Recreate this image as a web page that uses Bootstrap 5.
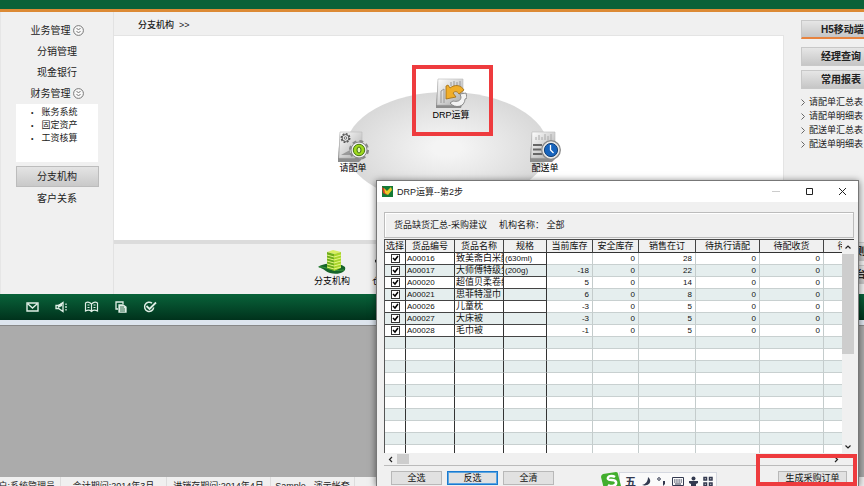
<!DOCTYPE html>
<html lang="zh-CN">
<head>
<meta charset="utf-8">
<meta name="viewport" content="width=device-width, initial-scale=1">
<title>DRP运算</title>
<link rel="stylesheet" href="https://cdn.jsdelivr.net/npm/bootstrap@5.3.0/dist/css/bootstrap.min.css">
<style>
body{font-family:"Liberation Sans","Noto Sans CJK SC",sans-serif;font-size:9px;line-height:14px;color:#222;background:#f0f0f0}
a{color:inherit;text-decoration:none}
svg{display:block;flex:none}
.topbar{height:12px;background:#0a6138;border-bottom:3px solid #dc8a35}
.workspace{height:282px;background:#f0f0f0}
.side{width:114px;padding-top:11px;border-right:1px solid #e2e2e2;border-left:1px solid #e6e6e6}
.side-link{font-size:10px;line-height:15px;height:15px;margin-bottom:6px;width:84px;gap:2px}
.side-sub{width:82px;height:58px;background:#fff;margin:-3px 0 4px;padding:2px 0 0 15px}
.side-sub li{line-height:13px;height:13px}
.side-sub li::before{content:"•";font-size:7px;margin-right:8px}
.side-on{width:83px;height:21px;line-height:19px;font-size:10px;border:1px solid #bcbcbc;background:linear-gradient(#e4e4e4,#c9c9c9);margin-bottom:4px}
.crumb{height:23px;padding:6px 0 0 24px;font-weight:500}
.canvas{height:205px;background:#fff;border:1px solid #e4e4e4;border-width:1px 1px 0 0}
.disc{left:232px;top:56px;width:202px;height:112px;border-radius:50%;background:radial-gradient(#f4f4f4 10%,#e2e2e2 50%,#cbcbcb)}
.node{width:60px;line-height:11px;color:#000}
.n-drp{left:307px;top:42px}.n-req{left:209px;top:95px}.n-send{left:401px;top:95px}
.mark-box{border:4px solid #ee3b3e;pointer-events:none}
.mark-drp{left:298px;top:29px;width:81px;height:71px}
.mark-make{right:1px;bottom:0;width:101px;height:32px}
.shelf{height:54px;border-top:4px solid #dcdcdc;padding:5px 0 0 193px;gap:8px}
.shelf a{width:50px;line-height:12px;color:#000}
.panel{width:80px;padding:8px 0 0 17px}
.panel-btn{height:19px;width:90px;padding:0 0 0 19px;border:1px solid #c8c8c8;border-radius:0;background:linear-gradient(#e6e6e6,#c6c6c6);font-size:10px;line-height:17px;font-weight:700;text-align:left;color:#222;flex:none}
.panel-btn.on{border-bottom:2px solid #e78440}
.panel-links{padding-top:6px}
.panel-link{line-height:14px;color:#222;white-space:nowrap;gap:4px}
.panel-low{margin-top:91px;gap:4px}
.panel-low .panel-btn{padding-left:54px}
.toolstrip{height:26px;background:linear-gradient(#09633a,#00321c);padding-left:26px;gap:16px}
.edge{height:6px;background:#dde5ee;border-bottom:1px solid #888}
.mdi{background:#ababab}
.statusbar{height:9px;background:#f0f0f0;white-space:nowrap}
.statusbar span{line-height:14px;padding-top:2px;border-right:1px solid #ddd;text-align:center;height:18px}
.s1{width:61px;padding-right:5px}.s2{width:106px}.s3{width:104px}.s4{width:84px}
.dlg{left:376px;right:5px;top:180px;bottom:0;background:#f0f0f0;border:1px solid #777;border-bottom:0;box-shadow:0 1px 7px rgba(0,0,0,.55)}
.dlg-title{height:21px;background:#fff;padding:0 11px 0 5px;color:#222}
.dlg-title button{border:0;background:none;padding:0;margin-left:24px}
.dlg-main{padding:10px 4px 0 7px}
.info{height:26px;border:1px solid #bcbcbc;box-shadow:inset 1px 1px #fff;padding-left:9px;gap:12px;margin-bottom:1px}
.grid-box{border-left:1px solid #555;border-top:1px solid #444;height:214px}
.grid-view{min-width:0}
.sheet{width:503px;table-layout:fixed;border-collapse:separate;border-spacing:0;background:#fff;color:#111}
.sheet th,.sheet td{height:12px;padding:0 3px 0 1px;line-height:11px;border-right:1px solid #c4cccc;border-bottom:1px solid #c8d0d0;overflow:hidden;white-space:nowrap;text-align:right;font-size:8px}
.sheet th{height:13px;line-height:12px;padding:0;text-align:center;font-weight:400;font-size:9px;background:#f0f0f0;border-right-color:#444;border-bottom-color:#333}
.sheet tbody tr:nth-child(even){background:#e5eeee}
.sheet td:nth-child(-n+4){text-align:left;border-right-color:#333}
.sheet td:nth-child(1){padding:0 0 0 6px}
.sheet td:nth-child(3){font-size:9px;padding-right:0}
.sheet .goods td:nth-child(-n+4){border-bottom-color:#444}
.tick{appearance:none;display:block;width:9px;height:9px;margin:0;border:1px solid #333;background:#fff url("data:image/svg+xml,%3Csvg xmlns='http://www.w3.org/2000/svg' viewBox='0 0 7 7'%3E%3Cpath d='M1 3l2 2 3-4' fill='none' stroke='%23000' stroke-width='1.5'/%3E%3C/svg%3E")}
.vbar{width:12px;background:#f0f0f0}
.vthumb{height:100px;background:#cdcdcd}
.hbar{height:13px;border-bottom:1px solid #bbb;padding:0 15px 0 4px}
.hthumb{width:12px;height:10px;background:#cdcdcd;margin-left:4px}
.btn-row{padding:5px 7px 0 7px;gap:5px}
.win-btn{width:51px;height:14px;padding:0;border:1px solid #b8b8b8;border-radius:0;background:#e1e1e1;font-size:9px;line-height:12px;color:#111}
.win-btn.focus-btn{border:1px solid #1a7ad0;outline:1px solid #5ca5e0;outline-offset:-2px}
.win-btn.make{width:69px}
.ime{left:223px;bottom:-6px;height:20px}
.ime-bar{background:#fafafa;border:1px solid #d5d8e0;padding:0 3px 0 5px;margin-left:-3px;height:19px;gap:5px;width:98px;font-size:11px;color:#33394f;font-weight:700}
</style>
<script src="https://cdn.jsdelivr.net/npm/bootstrap@5.3.0/dist/js/bootstrap.bundle.min.js"></script>
</head>
<body>
<div class="vh-100 d-flex flex-column overflow-hidden position-relative">
  <header class="topbar flex-shrink-0"></header>

  <div class="workspace d-flex flex-shrink-0 overflow-hidden">
    <nav class="side flex-shrink-0 d-flex flex-column align-items-center">
      <a href="#" class="side-link d-flex justify-content-center align-items-center"><span>业务管理</span>
        <svg width="11" height="11" viewBox="0 0 11 11" fill="none" stroke="#777"><circle cx="5.500" cy="5.500" r="4.900" fill="#f8f8f8"/><path d="M3.500 3l2 2 2-2M3.500 6l2 2 2-2"/></svg></a>
      <a href="#" class="side-link text-center">分销管理</a>
      <a href="#" class="side-link text-center">现金银行</a>
      <a href="#" class="side-link d-flex justify-content-center align-items-center"><span>财务管理</span>
        <svg width="11" height="11" viewBox="0 0 11 11" fill="none" stroke="#777"><circle cx="5.500" cy="5.500" r="4.900" fill="#f8f8f8"/><path d="M3.500 3l2 2 2-2M3.500 6l2 2 2-2"/></svg></a>
      <ul class="side-sub list-unstyled">
        <li><a href="#">账务系统</a></li>
        <li><a href="#">固定资产</a></li>
        <li><a href="#">工资核算</a></li>
      </ul>
      <a href="#" class="side-on text-center">分支机构</a>
      <a href="#" class="side-link text-center">客户关系</a>
    </nav>

    <main class="flex-fill">
      <div class="crumb">分支机构&nbsp; &gt;&gt;</div>
      <div class="canvas position-relative overflow-hidden">
        <div class="disc position-absolute"></div>
        <a href="#" class="node n-drp position-absolute d-flex flex-column align-items-center">
          <svg width="32" height="32" viewBox="0 0 32 32"><defs><linearGradient id="pg" x2="1" y2="1"><stop stop-color="#fff"/><stop offset="1" stop-color="#aaa"/></linearGradient></defs><path d="M3 1h25v23l-2 6H1V27z" fill="#8c8c8c"/><path d="M3 1h25v26H2z" fill="url(#pg)" stroke="#bbb" stroke-width=".6"/><path d="M6 25V13l3-2v14M16 8V4M19 8V3M22 8V4M25 8V3" fill="none" stroke="#999"/><path d="M11 8l2-1 2 3c5-4 11-3 14 2l-5 4c-2-3-4-3-6-1l3 4-10 2z" fill="#f0ae2b" stroke="#a06b10" stroke-width=".8"/><path d="M31 15l-6 1 1 3c0 4-4 5-8 4l-3 2c5 6 15 4 15-4l2-1z" fill="#f3f3f3" stroke="#777" stroke-width=".8"/></svg>
          <span>DRP运算</span></a>
        <a href="#" class="node n-req position-absolute d-flex flex-column align-items-center">
          <svg width="32" height="32" viewBox="0 0 32 32"><path d="M3 1h22v27l-3 3H1l0-4z" fill="#8c8c8c"/><path d="M3 1h22v26H2z" fill="url(#pg)" stroke="#bbb" stroke-width=".6"/><circle cx="8.500" cy="7" r="4" fill="none" stroke="#555" stroke-width="2" stroke-dasharray="1.800 1.300"/><circle cx="8.500" cy="7" r="3.400" fill="#eee" stroke="#555"/><circle cx="8.500" cy="7" r="1.300" fill="none" stroke="#555" stroke-width=".8"/><path d="M4 24l9-5v5z" fill="#999"/><circle cx="22" cy="19" r="8.500" fill="none" stroke="#888" stroke-width="3" stroke-dasharray="3.700 3"/><circle cx="22" cy="19" r="8" fill="#eee" stroke="#888"/><circle cx="22" cy="19" r="5.700" fill="#9ed91d" stroke="#4a7a13"/><ellipse cx="22" cy="19" rx="2" ry="3" fill="#e5f8b0" stroke="#416e10"/></svg>
          <span>请配单</span></a>
        <a href="#" class="node n-send position-absolute d-flex flex-column align-items-center">
          <svg width="32" height="32" viewBox="0 0 32 32"><path d="M3 1h23v27l-3 3H1v-4z" fill="#8c8c8c"/><path d="M3 1h23v26H2z" fill="url(#pg)" stroke="#bbb" stroke-width=".6"/><path d="M7 9V6M10 9V4M13 9V6M16 9V3M19 9V5M22 9V3" stroke="#aaa"/><path d="M4 14h9M4 18.500h8M4 23h9" stroke="#666" stroke-width="2"/><circle cx="22" cy="19" r="9.300" fill="#e8e8e8" stroke="#888" stroke-width="1.300"/><circle cx="22" cy="19" r="6.600" fill="#1764bd" stroke="#164378"/><path d="M21.500 14v5l3 3" fill="none" stroke="#fff" stroke-width="1.300"/></svg>
          <span>配送单</span></a>
        <div class="mark-box mark-drp position-absolute"></div>
      </div>
      <div class="shelf d-flex">
        <a href="#" class="d-flex flex-column align-items-center">
          <svg width="30" height="26" viewBox="0 0 30 26"><path d="M1 18c5-4 20-5 27 0 2 6-8 8-15 6-4-1-5-4-12-6z" fill="#16642a"/><path d="M2 18c6-1 12 5 25 3" stroke="#3c9a3e" fill="none"/><path d="M10 3l6-2 8 2-7 2z" fill="#d9ee62"/><path d="M10 3l7 2v17l-7-3z" fill="#6fae1c"/><path d="M24 3l-7 2v17l7-3z" fill="#a8d52b"/><path d="M10 6l7 2 7-2M10 9l7 2 7-2M10 12l7 2 7-2M10 15l7 2 7-2M10 18l7 2 7-2" stroke="#e4f583" fill="none"/></svg>
          <span>分支机构</span></a>
        <a href="#" class="d-flex flex-column align-items-center">
          <svg width="30" height="26" viewBox="0 0 30 26"><path d="M0 11l5 8h20" fill="none" stroke="#222" stroke-width="1.500"/></svg>
          <span>仓储配送</span></a>
      </div>
    </main>

    <aside class="panel flex-shrink-0 overflow-hidden">
      <div class="d-flex flex-column gap-1">
        <button class="panel-btn on">H5移动端</button>
        <button class="panel-btn mt-1 mb-0">经理查询</button>
        <button class="panel-btn">常用报表</button>
      </div>
      <div class="panel-links">
        <a href="#" class="panel-link d-flex align-items-center"><svg width="4" height="7" viewBox="0 0 4 7"><path d="M.5.500l3 3-3 3" fill="none" stroke="#666"/></svg>请配单汇总表</a>
        <a href="#" class="panel-link d-flex align-items-center"><svg width="4" height="7" viewBox="0 0 4 7"><path d="M.5.500l3 3-3 3" fill="none" stroke="#666"/></svg>请配单明细表</a>
        <a href="#" class="panel-link d-flex align-items-center"><svg width="4" height="7" viewBox="0 0 4 7"><path d="M.5.500l3 3-3 3" fill="none" stroke="#666"/></svg>配送单汇总表</a>
        <a href="#" class="panel-link d-flex align-items-center"><svg width="4" height="7" viewBox="0 0 4 7"><path d="M.5.500l3 3-3 3" fill="none" stroke="#666"/></svg>配送单明细表</a>
      </div>
      <div class="panel-low d-flex flex-column">
        <button class="panel-btn">则</button>
        <button class="panel-btn">台</button>
      </div>
    </aside>
  </div>

  <div class="toolstrip d-flex align-items-center flex-shrink-0">
    <svg width="13" height="12" viewBox="0 0 13 12" fill="none" stroke="#dfeee5" stroke-width="1.400"><path d="M1 2h11v8H1zM2 3l4.500 4L11 3"/></svg>
    <svg width="13" height="12" viewBox="0 0 13 12" fill="none" stroke="#dfeee5" stroke-width="1.300"><path d="M1 4.500h2.500L8 1.500v9L3.500 7.500H1z"/><path d="M3 4l4-2v3L3 7z" fill="#dfeee5" stroke="none"/><path d="M11 2.500v1.500M11 5v2M11 8v1.500"/></svg>
    <svg width="15" height="12" viewBox="0 0 15 12" fill="none" stroke="#dfeee5" stroke-width="1.200"><path d="M7.500 3C5.500 1 3 1 1.500 2v8C3.500 9 6 9 7.500 10.500 9 9 11.500 9 13.500 10V2C12 1 9.500 1 7.500 3zv7M3.500 4h2M3.500 6.500h2M9.500 4h2M9.500 6.500h2"/></svg>
    <svg width="12" height="12" viewBox="0 0 12 12" fill="none" stroke="#dfeee5" stroke-width="1.300"><path d="M3 8H1V1h7v2"/><path d="M4 4h4l3 2v5H4z" fill="#dfeee5"/><path d="M5 6h4M5 8h5M5 10h5" stroke="#0a4f2e" stroke-width=".8"/></svg>
    <svg width="14" height="12" viewBox="0 0 14 12" fill="none" stroke="#dfeee5" stroke-width="1.500"><path d="M9 2.200A4.600 4.600 0 1 0 10.700 6.500"/><path d="M3.500 5l3 3L13 1.500" stroke-width="1.800"/></svg>
  </div>
  <div class="edge flex-shrink-0"></div>
  <div class="mdi flex-fill"></div>
  <footer class="statusbar d-flex flex-shrink-0 overflow-hidden">
    <span class="s1 d-flex justify-content-end">用户:系统管理员</span><span class="s2">会计期间:2014年3月</span><span class="s3">进销存期间:2014年4月</span><span class="s4">Sample - 演示帐套</span>
  </footer>

  <section class="dlg position-absolute d-flex flex-column" role="dialog" aria-label="DRP运算">
    <div class="dlg-title d-flex align-items-center flex-shrink-0">
      <svg width="11" height="11" viewBox="0 0 11 11"><path d="M0 0h11v11H0z" fill="#147a36"/><path d="M0 1l4 3 1 5-4-2z" fill="#d84123"/><path d="M2 2l3 3 4-4 1 3-4 5-3-2z" fill="#ebca28"/></svg>
      <span class="ms-1 me-auto">DRP运算--第2步</span>
      <button aria-label="最小化"><svg width="9" height="9" viewBox="0 0 9 9"><path d="M0 4.500h8" stroke="#ccc"/></svg></button>
      <button aria-label="最大化"><svg width="9" height="9" viewBox="0 0 9 9"><path d="M1.500 1.500h6v6h-6z" fill="none" stroke="#222"/></svg></button>
      <button aria-label="关闭"><svg width="9" height="9" viewBox="0 0 9 9"><path d="M1 1l7 7M8 1L1 8" stroke="#222"/></svg></button>
    </div>
    <div class="dlg-main">
      <div class="info d-flex align-items-center"><span>货品缺货汇总-采购建议</span><span>机构名称：&nbsp;全部</span></div>
      <div class="grid-box d-flex overflow-hidden">
        <div class="grid-view flex-fill overflow-hidden">
          <table class="sheet">
            <colgroup><col width="21"><col width="49"><col width="49"><col width="43"><col width="46"><col width="46"><col width="57"><col width="64"><col width="64"><col width="64"></colgroup>
            <thead><tr><th>选择</th><th>货品编号</th><th>货品名称</th><th>规格</th><th>当前库存</th><th>安全库存</th><th>销售在订</th><th>待执行请配</th><th>待配收货</th><th>待发货量</th></tr></thead>
            <tbody>
              <tr class="goods"><td><input type="checkbox" class="tick" aria-label="选择 A00016" checked></td><td>A00016</td><td>致美斋白米醋</td><td>(630ml)</td><td></td><td>0</td><td>28</td><td>0</td><td>0</td><td></td></tr>
              <tr class="goods"><td><input type="checkbox" class="tick" aria-label="选择 A00017" checked></td><td>A00017</td><td>大师傅特级生</td><td>(200g)</td><td>-18</td><td>0</td><td>22</td><td>0</td><td>0</td><td></td></tr>
              <tr class="goods"><td><input type="checkbox" class="tick" aria-label="选择 A00020" checked></td><td>A00020</td><td>超值贝柔卷纸</td><td></td><td>5</td><td>0</td><td>14</td><td>0</td><td>0</td><td></td></tr>
              <tr class="goods"><td><input type="checkbox" class="tick" aria-label="选择 A00021" checked></td><td>A00021</td><td>思菲特湿巾</td><td></td><td>6</td><td>0</td><td>8</td><td>0</td><td>0</td><td></td></tr>
              <tr class="goods"><td><input type="checkbox" class="tick" aria-label="选择 A00026" checked></td><td>A00026</td><td>儿童枕</td><td></td><td>-3</td><td>0</td><td>5</td><td>0</td><td>0</td><td></td></tr>
              <tr class="goods"><td><input type="checkbox" class="tick" aria-label="选择 A00027" checked></td><td>A00027</td><td>大床被</td><td></td><td>-3</td><td>0</td><td>5</td><td>0</td><td>0</td><td></td></tr>
              <tr class="goods"><td><input type="checkbox" class="tick" aria-label="选择 A00028" checked></td><td>A00028</td><td>毛巾被</td><td></td><td>-1</td><td>0</td><td>5</td><td>0</td><td>0</td><td></td></tr>
              <tr><td></td><td></td><td></td><td></td><td></td><td></td><td></td><td></td><td></td><td></td></tr>
              <tr><td></td><td></td><td></td><td></td><td></td><td></td><td></td><td></td><td></td><td></td></tr>
              <tr><td></td><td></td><td></td><td></td><td></td><td></td><td></td><td></td><td></td><td></td></tr>
              <tr><td></td><td></td><td></td><td></td><td></td><td></td><td></td><td></td><td></td><td></td></tr>
              <tr><td></td><td></td><td></td><td></td><td></td><td></td><td></td><td></td><td></td><td></td></tr>
              <tr><td></td><td></td><td></td><td></td><td></td><td></td><td></td><td></td><td></td><td></td></tr>
              <tr><td></td><td></td><td></td><td></td><td></td><td></td><td></td><td></td><td></td><td></td></tr>
              <tr><td></td><td></td><td></td><td></td><td></td><td></td><td></td><td></td><td></td><td></td></tr>
              <tr><td></td><td></td><td></td><td></td><td></td><td></td><td></td><td></td><td></td><td></td></tr>
              <tr><td></td><td></td><td></td><td></td><td></td><td></td><td></td><td></td><td></td><td></td></tr>
            </tbody>
          </table>
        </div>
        <div class="vbar flex-shrink-0 d-flex flex-column align-items-center">
          <svg width="6" height="14" viewBox="0 0 6 14"><path d="M.5 8.500L3 6l2.500 2.500" fill="none" stroke="#222" stroke-width="1.200"/></svg>
          <div class="vthumb w-100"></div>
          <svg class="mt-auto" width="6" height="12" viewBox="0 0 6 12"><path d="M.5 4.500L3 7l2.500-2.500" fill="none" stroke="#222" stroke-width="1.200"/></svg>
        </div>
      </div>
      <div class="hbar d-flex align-items-center">
        <svg width="5" height="7" viewBox="0 0 5 7"><path d="M4 1L1.500 3.500 4 6" fill="none" stroke="#222" stroke-width="1.200"/></svg>
        <div class="hthumb"></div>
        <svg class="ms-auto" width="5" height="7" viewBox="0 0 5 7"><path d="M1 1l2.500 2.500L1 6" fill="none" stroke="#222" stroke-width="1.200"/></svg>
      </div>
      <div class="btn-row d-flex">
        <button class="btn win-btn">全选</button>
        <button class="btn win-btn focus-btn">反选</button>
        <button class="btn win-btn">全清</button>
        <button class="btn win-btn make ms-auto">生成采购订单</button>
      </div>
    </div>
    <div class="ime position-absolute d-flex align-items-start">
      <svg class="position-relative" width="22" height="20" viewBox="0 0 22 20"><path d="M1 5q0-2 2-3l13-2q2 0 2 2l3 12q0 3-2 3L7 20q-3 0-3-3z" fill="#42ae2d"/><path d="M15 5c-3-2-8-1-7 2 1 2 7 0 8 3 1 4-5 5-8 3" fill="none" stroke="#fff" stroke-width="2.500"/></svg>
      <div class="ime-bar d-flex align-items-center justify-content-between">
        <span>五</span>
        <svg width="11" height="11" viewBox="0 0 11 11"><path d="M7 1c5 4 1 10-6 8 4-1 6-4 6-8z" fill="#33394f"/></svg>
        <svg width="9" height="11" viewBox="0 0 9 11"><circle cx="2" cy="3" r="1.300" fill="none" stroke="#33394f"/><path d="M6 5h2v3L6 10z" fill="#33394f"/></svg>
        <svg width="12" height="11" viewBox="0 0 12 11" fill="none" stroke="#33394f"><path d="M.5 1.500h11v8H.5z"/><path d="M2 4h8M2 6h8" stroke-dasharray="1.500 .7"/><path d="M3 8h6"/></svg>
        <svg width="9" height="11" viewBox="0 0 9 11" fill="#33394f"><circle cx="4.500" cy="2.500" r="2"/><path d="M0 5h9v2L7 8v2H2V8L0 7z"/></svg>
        <svg width="10" height="11" viewBox="0 0 10 11" fill="none" stroke="#33394f" stroke-width="1.500"><path d="M1 1.500h2.500V4H1zM6.500 1.500H9V4H6.500zM1 7h2.500v2.500H1zM6.500 7H9v2.500H6.500z"/></svg>
      </div>
    </div>
    <div class="mark-box mark-make position-absolute"></div>
  </section>
</div>
</body>
</html>
